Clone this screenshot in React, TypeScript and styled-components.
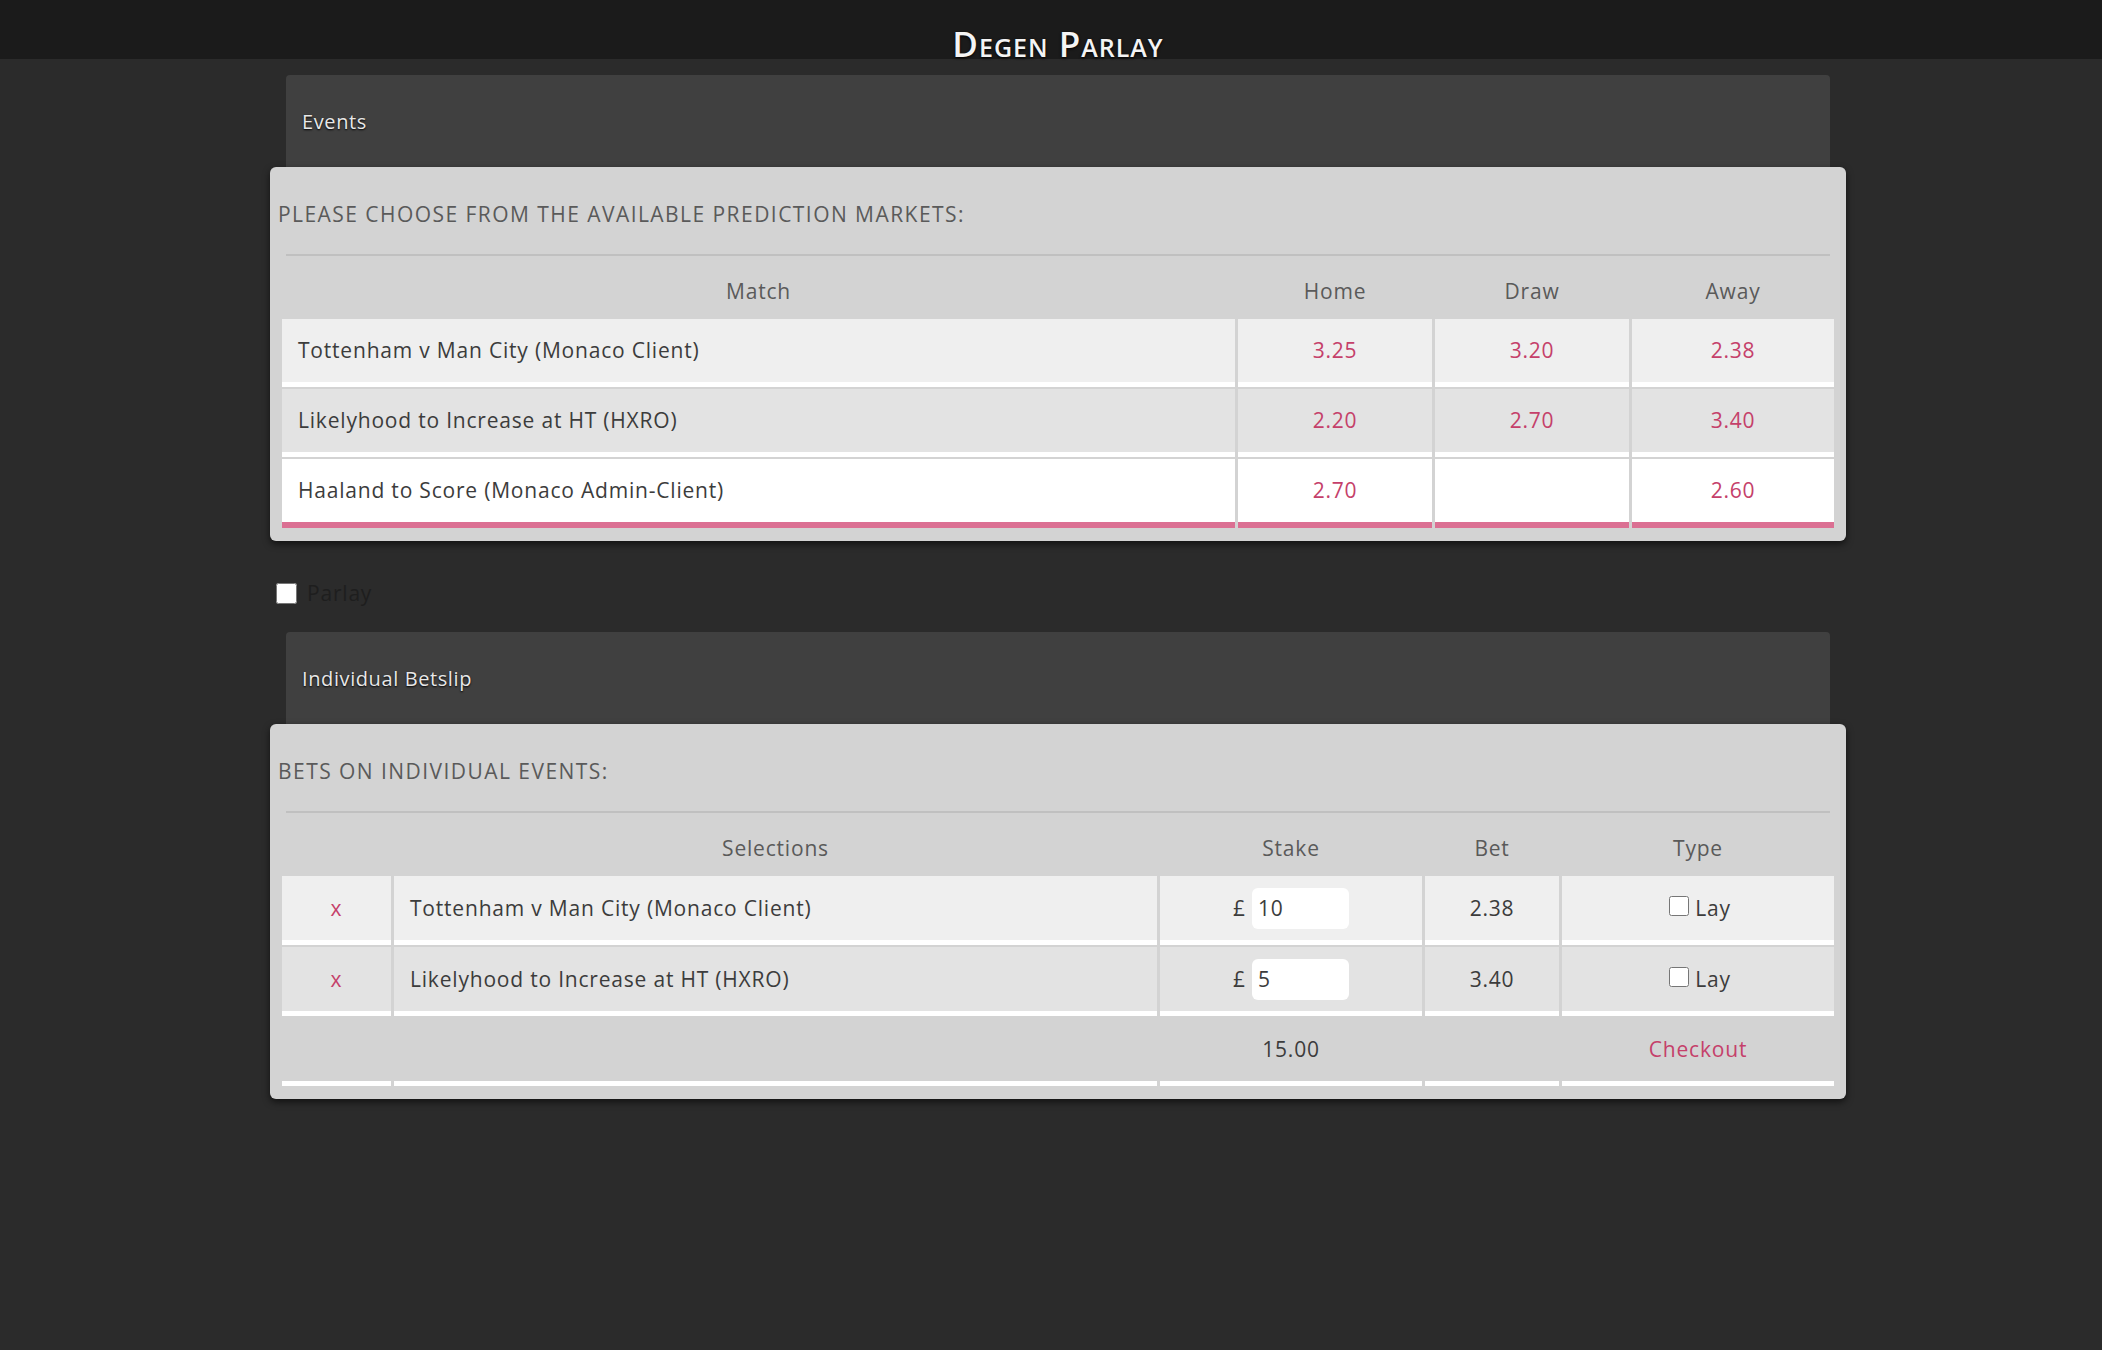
import React from "react";
import styled, { createGlobalStyle } from "styled-components";

const GlobalStyle = createGlobalStyle`
  html, body {
    margin: 0;
    min-height: 100%;
    background: #2b2b2b;
    font-family: "Open Sans", "Noto Sans", sans-serif;
    letter-spacing: 0.8px;
  }
`;

const Header = styled.header`
  height: 59px;
  background: #1b1b1b;
  display: flex;
  justify-content: center;
  align-items: flex-end;
  padding-left: 14px;
`;

const Title = styled.h1`
  margin: 0 0 -2px;
  font-size: 35px;
  line-height: 35px;
  font-weight: 600;
  font-variant: small-caps;
  letter-spacing: 1px;
  color: #f4f4f4;
  text-shadow: 0 1px 3px #000;
`;

const Main = styled.main`
  padding: 16px 0 60px 14px;
`;

const Inner = styled.div`
  width: 1576px;
  margin: 0 auto;
`;

const Panel = styled.div`
  margin: 0 16px;
  height: 92px;
  background: #404040;
  border-radius: 4px 4px 0 0;
  display: flex;
  align-items: center;
  padding-left: 16px;
  color: #e8e8e8;
  font-size: 20px;
  letter-spacing: 0.6px;
  text-shadow: 0 1px 2px #000;
`;

const Card = styled.section`
  background: #d3d3d3;
  border-radius: 6px;
  box-shadow: 0 3px 7px rgba(0, 0, 0, 0.6);
  padding-bottom: 11px;
`;

const CardTitle = styled.div`
  padding: 32px 8px 0;
  font-size: 21px;
  line-height: 30px;
  letter-spacing: 1.45px;
  color: #5a5a5a;
`;

const Rule = styled.hr`
  margin: 25px 16px 0;
  border: 0;
  border-top: 2px solid #c0c0c0;
`;

const Table = styled.table`
  width: calc(100% - 18px);
  margin: 0 9px;
  border-collapse: separate;
  border-spacing: 3px 2px;
  table-layout: fixed;
`;

const Th = styled.th`
  padding: 19px 16px 12px;
  font-size: 21px;
  line-height: 28px;
  font-weight: 400;
  color: #5a5a5a;
  text-align: center;
`;

type Tone = "light" | "mid" | "white" | "none";

const toneColors: Record<Tone, string> = {
  light: "#efefef",
  mid: "#e3e3e3",
  white: "#ffffff",
  none: "transparent",
};

const Td = styled.td<{
  $tone: Tone;
  $align?: "left" | "center";
  $active?: boolean;
  $pink?: boolean;
  $tight?: boolean;
}>`
  padding: ${({ $tight }) => ($tight ? "11px 16px" : "17px 16px 18px")};
  font-size: 21px;
  line-height: 28px;
  color: ${({ $pink }) => ($pink ? "#c5406a" : "#3c3c3c")};
  background: ${({ $tone }) => toneColors[$tone]};
  text-align: ${({ $align }) => $align ?? "center"};
  border-bottom: ${({ $active }) =>
    $active ? "6px solid palevioletred" : "5px solid #ffffff"};
  white-space: nowrap;
`;

const ParlayRow = styled.label`
  display: flex;
  align-items: center;
  gap: 10px;
  margin: 38px 0 25px 6px;
  font-size: 21px;
  color: #1e1e1e;
`;

const BigCheck = styled.input`
  width: 21px;
  height: 21px;
  margin: 0;
`;

const StakeWrap = styled.span`
  display: inline-flex;
  align-items: center;
  gap: 6px;
  vertical-align: middle;
`;

const StakeInput = styled.input`
  width: 97px;
  height: 41px;
  box-sizing: border-box;
  border: 0;
  border-radius: 6px;
  padding: 0 6px;
  background: #ffffff;
  font-family: inherit;
  font-size: 21px;
  letter-spacing: inherit;
  color: #3c3c3c;
  outline: none;
`;

const LayCheck = styled.input`
  width: 20px;
  height: 20px;
  margin: 3px 6px 3px 4px;
`;

const markets = [
  { name: "Tottenham v Man City (Monaco Client)", odds: ["3.25", "3.20", "2.38"], tone: "light" as Tone },
  { name: "Likelyhood to Increase at HT (HXRO)", odds: ["2.20", "2.70", "3.40"], tone: "mid" as Tone },
  { name: "Haaland to Score (Monaco Admin-Client)", odds: ["2.70", "", "2.60"], tone: "white" as Tone, active: true },
];

const bets = [
  { name: "Tottenham v Man City (Monaco Client)", stake: "10", price: "2.38", tone: "light" as Tone },
  { name: "Likelyhood to Increase at HT (HXRO)", stake: "5", price: "3.40", tone: "mid" as Tone },
];

export default function App() {
  return (
    <>
      <GlobalStyle />
      <Header>
        <Title>Degen Parlay</Title>
      </Header>
      <Main>
        <Inner>
          <Panel>Events</Panel>
          <Card>
            <CardTitle>PLEASE CHOOSE FROM THE AVAILABLE PREDICTION MARKETS:</CardTitle>
            <Rule />
            <Table>
              <colgroup>
                <col style={{ width: 953 }} />
                <col style={{ width: 194 }} />
                <col style={{ width: 194 }} />
                <col />
              </colgroup>
              <thead>
                <tr>
                  <Th>Match</Th>
                  <Th>Home</Th>
                  <Th>Draw</Th>
                  <Th>Away</Th>
                </tr>
              </thead>
              <tbody>
                {markets.map((m) => (
                  <tr key={m.name}>
                    <Td $tone={m.tone} $align="left" $active={m.active}>
                      {m.name}
                    </Td>
                    {m.odds.map((o, i) => (
                      <Td key={i} $tone={m.tone} $active={m.active} $pink>
                        {o}
                      </Td>
                    ))}
                  </tr>
                ))}
              </tbody>
            </Table>
          </Card>

          <ParlayRow>
            <BigCheck type="checkbox" />
            Parlay
          </ParlayRow>

          <Panel>Individual Betslip</Panel>
          <Card>
            <CardTitle>BETS ON INDIVIDUAL EVENTS:</CardTitle>
            <Rule />
            <Table>
              <colgroup>
                <col style={{ width: 109 }} />
                <col style={{ width: 763 }} />
                <col style={{ width: 262 }} />
                <col style={{ width: 134 }} />
                <col />
              </colgroup>
              <thead>
                <tr>
                  <Th />
                  <Th>Selections</Th>
                  <Th>Stake</Th>
                  <Th>Bet</Th>
                  <Th>Type</Th>
                </tr>
              </thead>
              <tbody>
                {bets.map((b) => (
                  <tr key={b.name}>
                    <Td $tone={b.tone} $pink>
                      x
                    </Td>
                    <Td $tone={b.tone} $align="left">
                      {b.name}
                    </Td>
                    <Td $tone={b.tone} $tight>
                      <StakeWrap>
                        <span>£</span>
                        <StakeInput defaultValue={b.stake} />
                      </StakeWrap>
                    </Td>
                    <Td $tone={b.tone}>{b.price}</Td>
                    <Td $tone={b.tone}>
                      <LayCheck type="checkbox" />
                      Lay
                    </Td>
                  </tr>
                ))}
                <tr>
                  <Td $tone="none" />
                  <Td $tone="none" />
                  <Td $tone="none">15.00</Td>
                  <Td $tone="none" />
                  <Td $tone="none" $pink>
                    Checkout
                  </Td>
                </tr>
              </tbody>
            </Table>
          </Card>
        </Inner>
      </Main>
    </>
  );
}
